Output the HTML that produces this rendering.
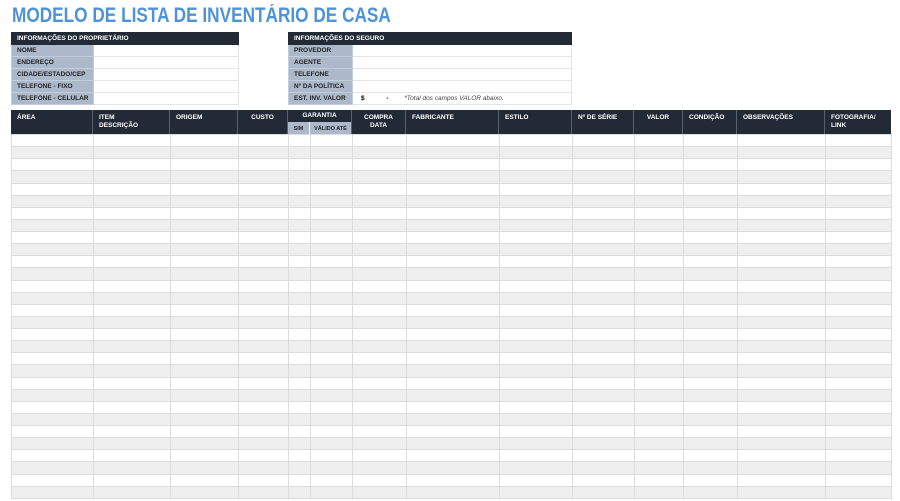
<!DOCTYPE html>
<html><head><meta charset="utf-8"><style>
body{margin:0;width:900px;height:501px;background:#fff;font-family:"Liberation Sans",sans-serif;position:relative;overflow:hidden}
.a{position:absolute;box-sizing:border-box}
.t{left:12px;top:4px;font-size:21px;font-weight:bold;color:#4d93d9;transform:scaleX(0.82);transform-origin:0 0;white-space:nowrap}
table{position:absolute;border-collapse:collapse;table-layout:fixed}
td{padding:0 0 0 5px;font-size:6.5px;font-weight:bold;box-sizing:border-box;overflow:hidden;white-space:nowrap}
.info td{height:12px;border:1px solid #e4e4e4}
.info .h{background:#222a36;color:#fff;border-color:#222a36}
.info .l{background:#acb9ca;color:#222;border-color:#c3cddb}
.main td{border:1px solid #dcdcdc;height:12.13px;padding:0}
.main tr:nth-child(even) td{background:#efefef}
.hd{position:absolute;top:110px;height:24px;background:#222a36;color:#fff;font-size:6.5px;font-weight:bold;box-sizing:border-box;padding:4px 0 0 6px;line-height:8px;border-right:1px solid #5a6270}
</style></head><body>
<div class="a t">MODELO DE LISTA DE INVENTÁRIO DE CASA</div>
<table class="info" style="left:11px;top:32px;width:227px">
<col style="width:82px"><col style="width:145px">
<tr><td class="h" colspan="2">INFORMAÇÕES DO PROPRIETÁRIO</td></tr>
<tr><td class="l">NOME</td><td></td></tr>
<tr><td class="l">ENDEREÇO</td><td></td></tr>
<tr><td class="l">CIDADE/ESTADO/CEP</td><td></td></tr>
<tr><td class="l">TELEFONE - FIXO</td><td></td></tr>
<tr><td class="l">TELEFONE - CELULAR</td><td></td></tr>
</table>
<table class="info" style="left:288px;top:32px;width:283px">
<col style="width:64px"><col style="width:219px">
<tr><td class="h" colspan="2">INFORMAÇÕES DO SEGURO</td></tr>
<tr><td class="l">PROVEDOR</td><td></td></tr>
<tr><td class="l">AGENTE</td><td></td></tr>
<tr><td class="l">TELEFONE</td><td></td></tr>
<tr><td class="l">Nº DA POLÍTICA</td><td></td></tr>
<tr><td class="l">EST. INV. VALOR</td><td style="padding-left:8px">$&nbsp;&nbsp;&nbsp;&nbsp;&nbsp;&nbsp;&nbsp;&nbsp;&nbsp;&nbsp;&nbsp;&nbsp;- <span style="font-weight:normal;font-style:italic;color:#444;margin-left:14px">*Total dos campos VALOR abaixo.</span></td></tr>
</table>
<table class="main" style="left:11px;top:134px;width:880px">
<col style="width:82px"><col style="width:77px"><col style="width:68px"><col style="width:50px"><col style="width:22px"><col style="width:42px"><col style="width:54px"><col style="width:93px"><col style="width:73px"><col style="width:62px"><col style="width:49px"><col style="width:54px"><col style="width:88px"><col style="width:66px">
<tr><td></td><td></td><td></td><td></td><td></td><td></td><td></td><td></td><td></td><td></td><td></td><td></td><td></td><td></td></tr>
<tr><td></td><td></td><td></td><td></td><td></td><td></td><td></td><td></td><td></td><td></td><td></td><td></td><td></td><td></td></tr>
<tr><td></td><td></td><td></td><td></td><td></td><td></td><td></td><td></td><td></td><td></td><td></td><td></td><td></td><td></td></tr>
<tr><td></td><td></td><td></td><td></td><td></td><td></td><td></td><td></td><td></td><td></td><td></td><td></td><td></td><td></td></tr>
<tr><td></td><td></td><td></td><td></td><td></td><td></td><td></td><td></td><td></td><td></td><td></td><td></td><td></td><td></td></tr>
<tr><td></td><td></td><td></td><td></td><td></td><td></td><td></td><td></td><td></td><td></td><td></td><td></td><td></td><td></td></tr>
<tr><td></td><td></td><td></td><td></td><td></td><td></td><td></td><td></td><td></td><td></td><td></td><td></td><td></td><td></td></tr>
<tr><td></td><td></td><td></td><td></td><td></td><td></td><td></td><td></td><td></td><td></td><td></td><td></td><td></td><td></td></tr>
<tr><td></td><td></td><td></td><td></td><td></td><td></td><td></td><td></td><td></td><td></td><td></td><td></td><td></td><td></td></tr>
<tr><td></td><td></td><td></td><td></td><td></td><td></td><td></td><td></td><td></td><td></td><td></td><td></td><td></td><td></td></tr>
<tr><td></td><td></td><td></td><td></td><td></td><td></td><td></td><td></td><td></td><td></td><td></td><td></td><td></td><td></td></tr>
<tr><td></td><td></td><td></td><td></td><td></td><td></td><td></td><td></td><td></td><td></td><td></td><td></td><td></td><td></td></tr>
<tr><td></td><td></td><td></td><td></td><td></td><td></td><td></td><td></td><td></td><td></td><td></td><td></td><td></td><td></td></tr>
<tr><td></td><td></td><td></td><td></td><td></td><td></td><td></td><td></td><td></td><td></td><td></td><td></td><td></td><td></td></tr>
<tr><td></td><td></td><td></td><td></td><td></td><td></td><td></td><td></td><td></td><td></td><td></td><td></td><td></td><td></td></tr>
<tr><td></td><td></td><td></td><td></td><td></td><td></td><td></td><td></td><td></td><td></td><td></td><td></td><td></td><td></td></tr>
<tr><td></td><td></td><td></td><td></td><td></td><td></td><td></td><td></td><td></td><td></td><td></td><td></td><td></td><td></td></tr>
<tr><td></td><td></td><td></td><td></td><td></td><td></td><td></td><td></td><td></td><td></td><td></td><td></td><td></td><td></td></tr>
<tr><td></td><td></td><td></td><td></td><td></td><td></td><td></td><td></td><td></td><td></td><td></td><td></td><td></td><td></td></tr>
<tr><td></td><td></td><td></td><td></td><td></td><td></td><td></td><td></td><td></td><td></td><td></td><td></td><td></td><td></td></tr>
<tr><td></td><td></td><td></td><td></td><td></td><td></td><td></td><td></td><td></td><td></td><td></td><td></td><td></td><td></td></tr>
<tr><td></td><td></td><td></td><td></td><td></td><td></td><td></td><td></td><td></td><td></td><td></td><td></td><td></td><td></td></tr>
<tr><td></td><td></td><td></td><td></td><td></td><td></td><td></td><td></td><td></td><td></td><td></td><td></td><td></td><td></td></tr>
<tr><td></td><td></td><td></td><td></td><td></td><td></td><td></td><td></td><td></td><td></td><td></td><td></td><td></td><td></td></tr>
<tr><td></td><td></td><td></td><td></td><td></td><td></td><td></td><td></td><td></td><td></td><td></td><td></td><td></td><td></td></tr>
<tr><td></td><td></td><td></td><td></td><td></td><td></td><td></td><td></td><td></td><td></td><td></td><td></td><td></td><td></td></tr>
<tr><td></td><td></td><td></td><td></td><td></td><td></td><td></td><td></td><td></td><td></td><td></td><td></td><td></td><td></td></tr>
<tr><td></td><td></td><td></td><td></td><td></td><td></td><td></td><td></td><td></td><td></td><td></td><td></td><td></td><td></td></tr>
<tr><td></td><td></td><td></td><td></td><td></td><td></td><td></td><td></td><td></td><td></td><td></td><td></td><td></td><td></td></tr>
<tr><td></td><td></td><td></td><td></td><td></td><td></td><td></td><td></td><td></td><td></td><td></td><td></td><td></td><td></td></tr>
</table>
<div class="hd" style="left:11px;width:82px">ÁREA</div>
<div class="hd" style="left:93px;width:77px">ITEM<br>DESCRIÇÃO</div>
<div class="hd" style="left:170px;width:68px">ORIGEM</div>
<div class="hd" style="left:238px;width:50px;text-align:center;padding-left:0">CUSTO</div>
<div class="hd" style="left:288px;width:64px;height:12px;text-align:center;padding:2px 0 0">GARANTIA</div>
<div class="hd" style="left:288px;top:122px;width:22px;height:12px;background:#acb9ca;color:#222;font-size:5.5px;padding:3px 0 0;text-align:center;border-right:1px solid #fff">SIM</div>
<div class="hd" style="left:310px;top:122px;width:42px;height:12px;background:#acb9ca;color:#222;font-size:5.5px;padding:3px 0 0;text-align:center">VÁLIDO ATÉ</div>
<div class="hd" style="left:352px;width:54px;text-align:center;padding-left:0">COMPRA<br>DATA</div>
<div class="hd" style="left:406px;width:93px">FABRICANTE</div>
<div class="hd" style="left:499px;width:73px">ESTILO</div>
<div class="hd" style="left:572px;width:62px">Nº DE SÉRIE</div>
<div class="hd" style="left:634px;width:49px;text-align:center;padding-left:0">VALOR</div>
<div class="hd" style="left:683px;width:54px">CONDIÇÃO</div>
<div class="hd" style="left:737px;width:88px">OBSERVAÇÕES</div>
<div class="hd" style="left:825px;width:66px;border-right:none">FOTOGRAFIA/<br>LINK</div>
</body></html>
